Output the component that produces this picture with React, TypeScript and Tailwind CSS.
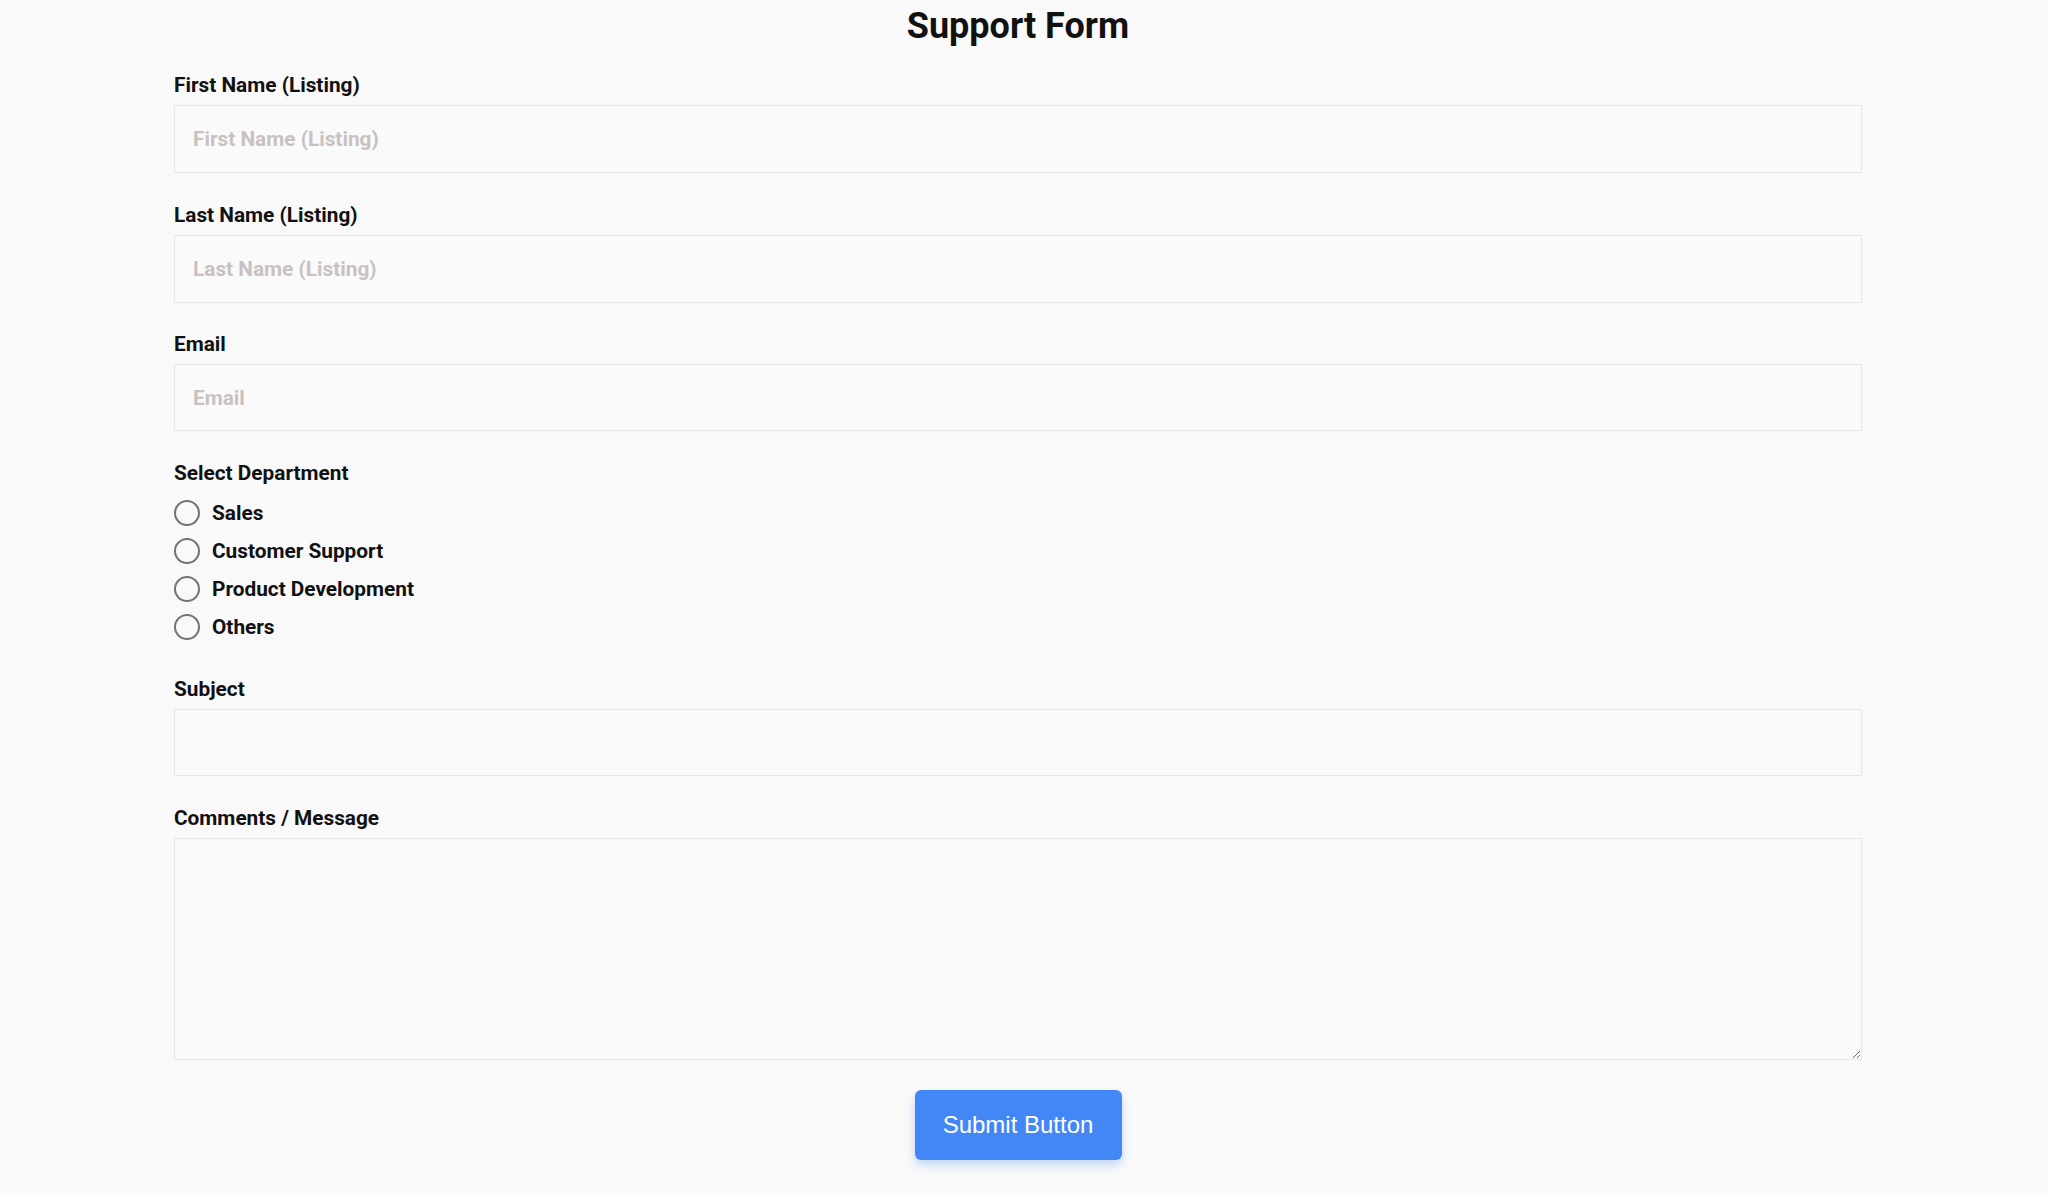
import React, { useState } from 'react';

const departments = ['Sales', 'Customer Support', 'Product Development', 'Others'];

const labelClass = 'block text-[20.8px] leading-[24px] font-bold text-[#111]';
const fieldClass =
  'mt-2 block w-full bg-[#fafafa] border border-[#e6e6e6] px-[18px] text-[20.8px] font-bold text-[#111] placeholder:text-[#c9c1c1] outline-none';

export default function App() {
  const [department, setDepartment] = useState('');
  const [form, setForm] = useState({ firstName: '', lastName: '', email: '', subject: '', message: '' });

  const update = (key: keyof typeof form) => (e: React.ChangeEvent<HTMLInputElement | HTMLTextAreaElement>) =>
    setForm({ ...form, [key]: e.target.value });

  return (
    <div className="min-h-screen bg-[#f9f9f9] font-['Roboto',sans-serif]">
      <form className="ml-[174px] w-[1688px] pt-[6px] pb-[30px]" onSubmit={(e) => e.preventDefault()}>
        <h1 className="text-center text-[36px] leading-[40px] font-bold text-[#111]">Support Form</h1>

        <div className="mt-[27px]">
          <label className={labelClass}>First Name (Listing)</label>
          <input
            type="text"
            value={form.firstName}
            onChange={update('firstName')}
            placeholder="First Name (Listing)"
            className={`${fieldClass} h-[68px]`}
          />
        </div>

        <div className="mt-[30px]">
          <label className={labelClass}>Last Name (Listing)</label>
          <input
            type="text"
            value={form.lastName}
            onChange={update('lastName')}
            placeholder="Last Name (Listing)"
            className={`${fieldClass} h-[68px]`}
          />
        </div>

        <div className="mt-[29px]">
          <label className={labelClass}>Email</label>
          <input
            type="email"
            value={form.email}
            onChange={update('email')}
            placeholder="Email"
            className={`${fieldClass} h-[67px]`}
          />
        </div>

        <div className="mt-[30px]">
          <span className={labelClass}>Select Department</span>
          <div className="mt-[9px] flex flex-col">
            {departments.map((d) => (
              <label key={d} className="flex h-[38px] items-center gap-3 cursor-pointer">
                <input
                  type="radio"
                  name="department"
                  checked={department === d}
                  onChange={() => setDepartment(d)}
                  className="appearance-none w-[26px] h-[26px] shrink-0 rounded-full border-[2.5px] border-[#737373] checked:border-[8px] checked:border-[#4287f5]"
                />
                <span className="text-[20.8px] leading-[24px] font-bold text-[#111]">{d}</span>
              </label>
            ))}
          </div>
        </div>

        <div className="mt-[31px]">
          <label className={labelClass}>Subject</label>
          <input
            type="text"
            value={form.subject}
            onChange={update('subject')}
            className={`${fieldClass} h-[67px]`}
          />
        </div>

        <div className="mt-[30px]">
          <label className={labelClass}>Comments / Message</label>
          <textarea
            value={form.message}
            onChange={update('message')}
            className={`${fieldClass} h-[222px] py-3 resize-y`}
          />
        </div>

        <div className="mt-[30px] flex justify-center">
          <button
            type="submit"
            className="h-[70px] w-[207px] rounded-[6px] bg-[#4287f5] text-[24px] text-white font-['Liberation_Sans',Arial,sans-serif] shadow-[0_5px_10px_rgba(66,135,245,0.3)]"
          >
            Submit Button
          </button>
        </div>
      </form>
    </div>
  );
}
